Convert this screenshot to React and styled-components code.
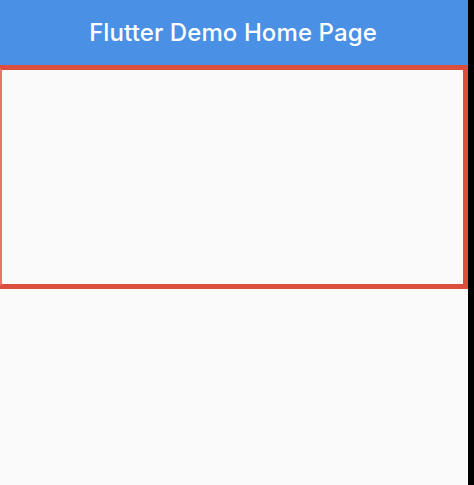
import React from "react";
import styled, { createGlobalStyle } from "styled-components";

const GlobalStyle = createGlobalStyle`
	html, body {
		margin: 0;
		padding: 0;
		background-color: #000;
	}
	#root {
		height: 485px;
	}
`;

const Screen = styled.div`
	display: flex;
	flex-flow: row nowrap;
	width: 474px;
	height: 485px;
	overflow: hidden;
	background-color: #000;
`;

const Page = styled.div`
	display: flex;
	flex-flow: column nowrap;
	width: 468px;
	height: 485px;
	background-color: #fafafa;
	font-family: Inter, "Noto Sans", sans-serif;
`;

const AppBar = styled.header`
	display: flex;
	justify-content: center;
	align-items: center;
	height: 65px;
	flex-shrink: 0;
	background-color: #4a90e4;
	color: white;
	h1 {
		margin: 0 0 0 -2px;
		font-size: 24px;
		font-weight: 500;
		letter-spacing: 0.1px;
	}
`;

const Frame = styled.div`
	height: ${pr => pr.h}px;
	margin-left: -3px;
	border: 5px solid #da4f3e;
	border-left-color: #e8776a;
	box-sizing: border-box;
	background-color: #fafafa;
`;

const App = () => {
	return (
		<>
			<GlobalStyle />
			<Screen>
				<Page>
					<AppBar>
						<h1>Flutter Demo Home Page</h1>
					</AppBar>
					<Frame h={224} />
				</Page>
			</Screen>
		</>
	);
};

export default App;
